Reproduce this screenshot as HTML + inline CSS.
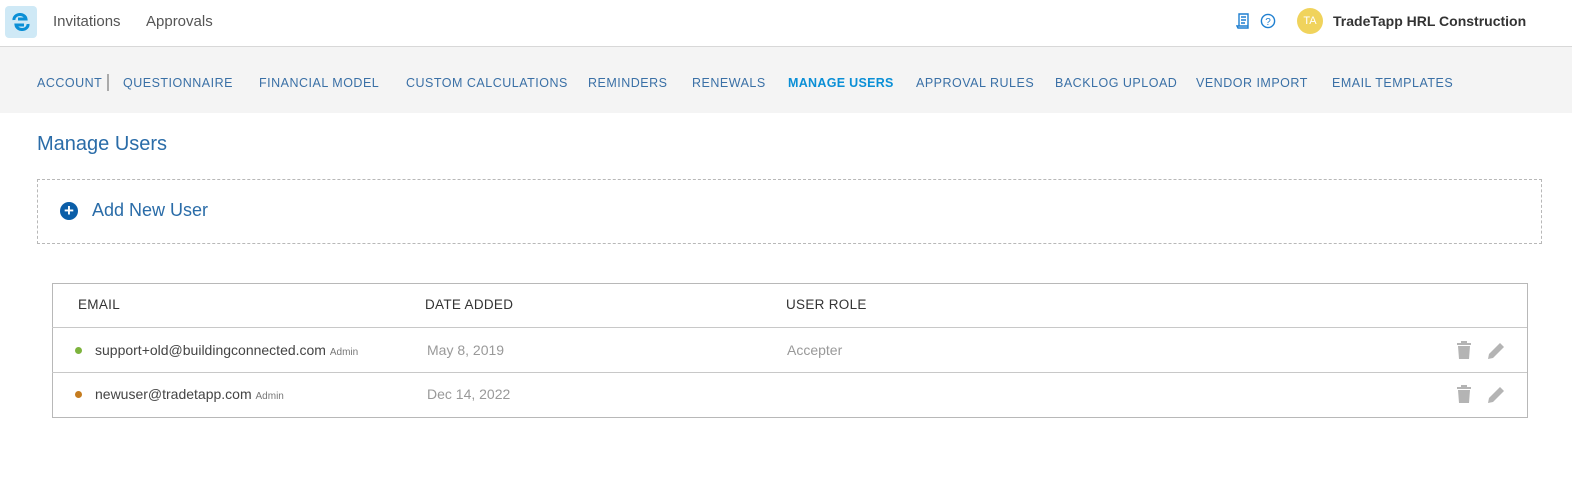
<!DOCTYPE html>
<html><head><style>
body{margin:0;width:1572px;height:477px;background:#fff;font-family:"Liberation Sans",sans-serif;position:relative;overflow:hidden}
.a{position:absolute;white-space:nowrap}
.nav{top:76px;font-size:12.5px;letter-spacing:0.5px;color:#3a70a6}
.row{position:absolute;left:52px;width:1475px;border-top:1px solid #c8c8c8}
</style></head><body>
<div class="a" style="left:5px;top:6px;width:32px;height:32px;background:#cfe9f6;border-radius:4px"></div>
<svg class="a" style="left:11px;top:13px" width="20" height="18" viewBox="0 0 20 18"><path d="M3 7 A6 5 0 0 1 15 6 L7 6" fill="none" stroke="#0a8fd6" stroke-width="3"/><path d="M17 11 A6 5 0 0 1 5 12 L13 12" fill="none" stroke="#0a8fd6" stroke-width="3"/></svg>
<div class="a" style="left:53px;top:13px;font-size:15px;color:#555">Invitations</div>
<div class="a" style="left:146px;top:13px;font-size:15px;color:#555">Approvals</div>
<svg class="a" style="left:1236px;top:13px" width="14" height="16" viewBox="0 0 14 16"><path d="M3 1h9v12H3zM1 13h11v2H2zM5 4h5M5 7h5M5 10h4" fill="none" stroke="#1e7fd0" stroke-width="1.4"/></svg>
<svg class="a" style="left:1260px;top:13px" width="16" height="16" viewBox="0 0 16 16"><circle cx="8" cy="8" r="6.6" fill="none" stroke="#1e7fd0" stroke-width="1.4"/><text x="8" y="12" font-size="10" text-anchor="middle" fill="#1e7fd0" font-family="Liberation Sans">?</text></svg>
<div class="a" style="left:1297px;top:8px;width:26px;height:26px;border-radius:50%;background:#f0d35c;color:#fff;font-size:11px;text-align:center;line-height:26px">TA</div>
<div class="a" style="left:1333px;top:13px;font-size:14px;font-weight:bold;color:#333">TradeTapp HRL Construction</div>
<div class="a" style="left:0;top:46px;width:1572px;height:66px;background:#f4f4f4;border-top:1px solid #d8d8d8"></div>
<div class="a nav" style="left:37px">ACCOUNT</div>
<div class="a" style="left:107px;top:74px;width:2px;height:17px;background:#aaa"></div>
<div class="a nav" style="left:123px">QUESTIONNAIRE</div>
<div class="a nav" style="left:259px">FINANCIAL MODEL</div>
<div class="a nav" style="left:406px">CUSTOM CALCULATIONS</div>
<div class="a nav" style="left:588px">REMINDERS</div>
<div class="a nav" style="left:692px">RENEWALS</div>
<div class="a nav" style="left:788px;color:#0a8fd6;font-weight:bold;letter-spacing:0.3px">MANAGE USERS</div>
<div class="a nav" style="left:916px">APPROVAL RULES</div>
<div class="a nav" style="left:1055px">BACKLOG UPLOAD</div>
<div class="a nav" style="left:1196px">VENDOR IMPORT</div>
<div class="a nav" style="left:1332px">EMAIL TEMPLATES</div>
<div class="a" style="left:37px;top:133px;font-size:20px;color:#2a6ca8">Manage Users</div>
<div class="a" style="left:37px;top:179px;width:1503px;height:63px;border:1px dashed #b8b8b8"></div>
<div class="a" style="left:60px;top:202px;width:18px;height:18px;border-radius:50%;background:#0b5ea8;color:#fff;text-align:center;font-size:17px;line-height:17px;font-weight:bold">+</div>
<div class="a" style="left:92px;top:200px;font-size:18px;color:#2a6ca8">Add New User</div>
<div class="a" style="left:52px;top:283px;width:1474px;height:133px;border:1px solid #b8b8b8"></div>
<div class="row" style="top:327px"></div>
<div class="row" style="top:372px"></div>
<div class="a" style="left:78px;top:297px;font-size:13.5px;color:#333;letter-spacing:.3px">EMAIL</div>
<div class="a" style="left:425px;top:297px;font-size:13.5px;color:#333;letter-spacing:.3px">DATE ADDED</div>
<div class="a" style="left:786px;top:297px;font-size:13.5px;color:#333;letter-spacing:.3px">USER ROLE</div>
<div class="a" style="left:75px;top:347px;width:7px;height:7px;border-radius:50%;background:#7db33d"></div>
<div class="a" style="left:95px;top:342px;font-size:14px;color:#444">support+old@buildingconnected.com <span style="font-size:10px;color:#777">Admin</span></div>
<div class="a" style="left:427px;top:342px;font-size:14px;color:#999">May 8, 2019</div>
<div class="a" style="left:787px;top:342px;font-size:14px;color:#999">Accepter</div>
<div class="a" style="left:75px;top:391px;width:7px;height:7px;border-radius:50%;background:#c57c1f"></div>
<div class="a" style="left:95px;top:386px;font-size:14px;color:#444">newuser@tradetapp.com <span style="font-size:10px;color:#777">Admin</span></div>
<div class="a" style="left:427px;top:386px;font-size:14px;color:#999">Dec 14, 2022</div>
<svg class="a" style="left:1456px;top:340px" width="60" height="20" viewBox="0 0 60 20"><path d="M1 3h14v2H1zM5 1h6v2H5zM2 6h12l-1 13H3z" fill="#b4b4b4"/><path d="M32 19l1-5L44 3l4 4L37 18z" fill="#b4b4b4"/></svg>
<svg class="a" style="left:1456px;top:384px" width="60" height="20" viewBox="0 0 60 20"><path d="M1 3h14v2H1zM5 1h6v2H5zM2 6h12l-1 13H3z" fill="#b4b4b4"/><path d="M32 19l1-5L44 3l4 4L37 18z" fill="#b4b4b4"/></svg>
</body></html>
